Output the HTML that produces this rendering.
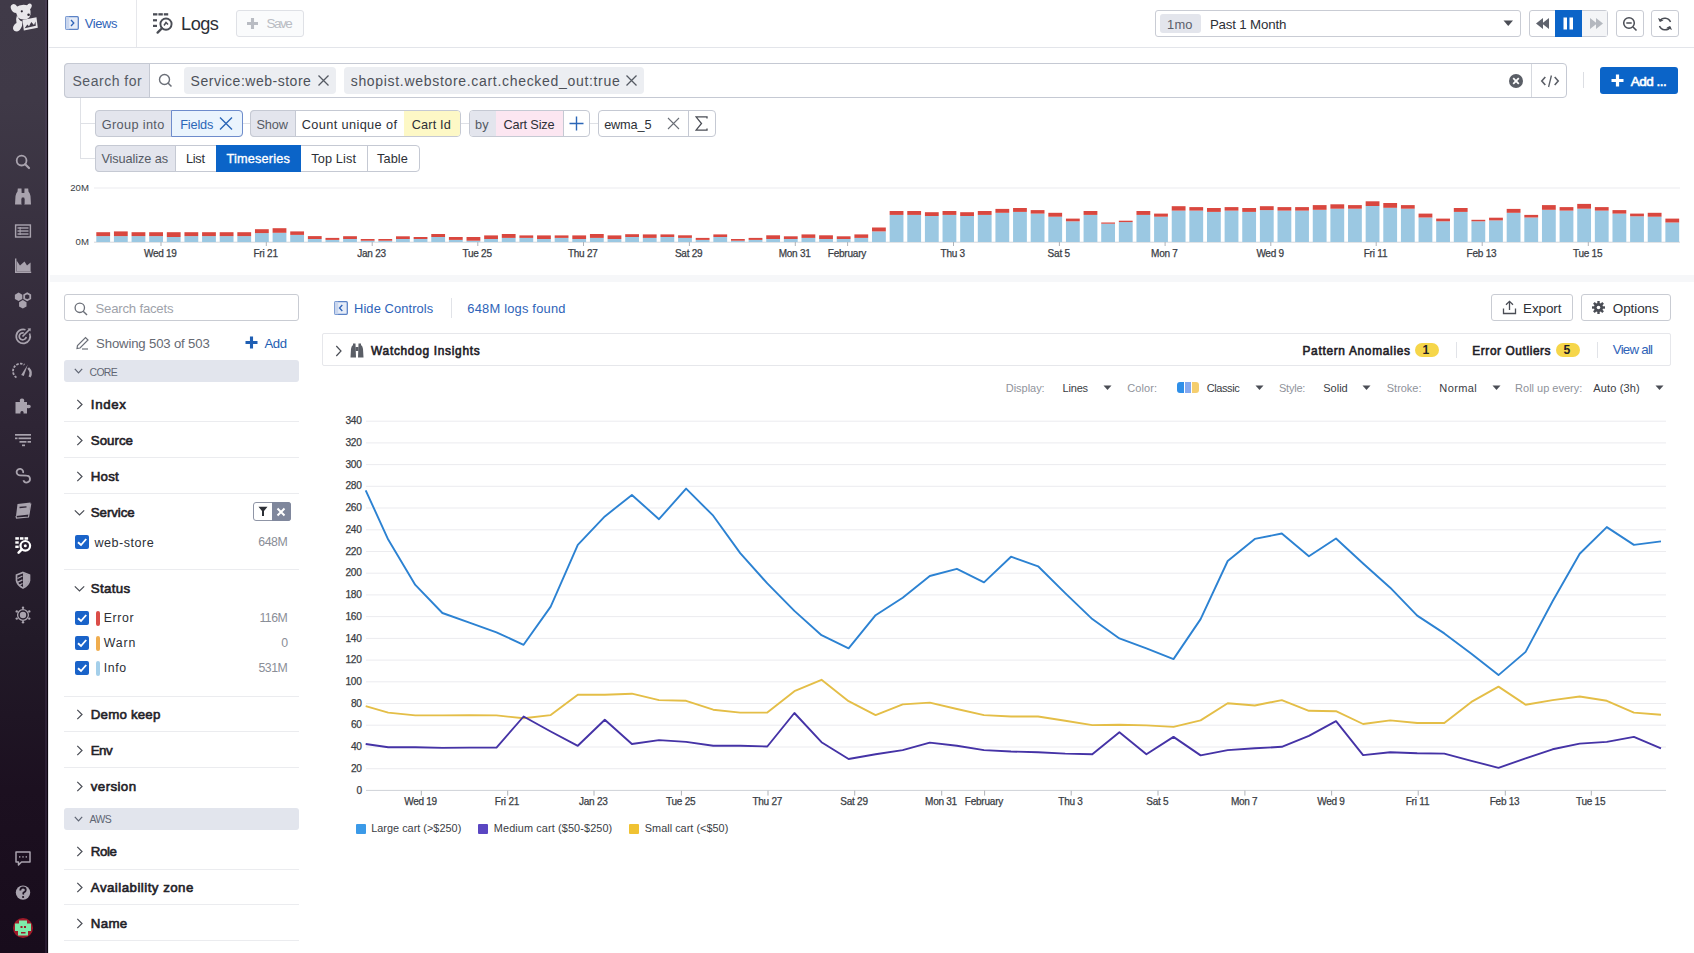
<!DOCTYPE html><html><head><meta charset="utf-8"><style>
html,body{margin:0;padding:0;}
body{width:1694px;height:953px;position:relative;overflow:hidden;background:#fff;font-family:"Liberation Sans",sans-serif;}
.t{position:absolute;white-space:nowrap;}
.r{position:absolute;box-sizing:border-box;}
</style></head><body>
<div class="r" style="left:0px;top:0px;width:48px;height:953px;background:linear-gradient(180deg,#403a48 0%,#3f3947 10.5%,#2e2535 44.6%,#221a28 67.2%,#1c1020 82.9%,#180c1c 100%);"></div>
<div class="r" style="left:45px;top:0px;width:2px;height:953px;background:rgba(90,70,110,0.25);"></div>
<div class="r" style="left:47px;top:0px;width:1px;height:953px;background:#0e0711;"></div>
<div class="r" style="left:48px;top:0px;width:1px;height:953px;background:#e4e4e7;"></div>
<svg class="r" style="left:0;top:0" width="48" height="953"><g fill="#e8e6ea">
<ellipse cx="14.5" cy="8.5" rx="3.3" ry="4.6" transform="rotate(-30 14.5 8.5)"/>
<ellipse cx="29" cy="6.8" rx="2.4" ry="3.4" transform="rotate(30 29 6.8)"/>
<path d="M15.5 7.5 Q21 3.5 28 5.5 Q31 9 30.5 14.5 Q29.5 19 25 19.5 Q20.5 20 18 17.5 Q15.5 13.5 15.5 7.5 Z"/>
<path d="M17 15 Q19 21 22.5 21.5 L22 26 Q20 31 17 31.5 Q13.5 31.5 13 28.5 Q13 25 16.5 23 Q15.5 19 17 15 Z"/>
<path d="M22.5 20 L36.5 17.2 L37.8 27.8 L23.8 30.6 Z"/>
</g>
<circle cx="21.8" cy="11.3" r="1.1" fill="#2b2530"/>
<circle cx="28.6" cy="14.8" r="1.3" fill="#2b2530"/>
<path d="M24.7 28.3 L27.3 24.5 L29 26.3 L31.3 22 L34 25 L35.5 21.5 L35.8 25.8 Z" fill="#3f3947"/><circle cx="21.6" cy="160.6" r="4.9" fill="none" stroke="#a9a3ae" stroke-width="1.8"/><path d="M25.2 164.2 L29 168" stroke="#a9a3ae" stroke-width="2.2" stroke-linecap="round"/><g fill="#a9a3ae"><path d="M15 204.5 L15.5 196 Q16 193 17.5 191.5 L17.8 188.5 L21.5 188.5 L22 204.5 Z"/><path d="M31 204.5 L30.5 196 Q30 193 28.5 191.5 L28.2 188.5 L24.5 188.5 L24 204.5 Z"/><rect x="21" y="193" width="4" height="4.5"/></g><rect x="21.4" y="198.5" width="3.2" height="6" fill="#3a3342"/><rect x="15.6" y="225" width="14.8" height="12" fill="none" stroke="#a9a3ae" stroke-width="1.4"/><g fill="#a9a3ae"><rect x="17.5" y="227.3" width="11" height="1.4"/><rect x="17.5" y="230.3" width="11" height="1.4"/><rect x="17.5" y="233.3" width="11" height="1.4"/><rect x="19.6" y="227" width="1" height="8" /></g><path d="M15.7 258.5 L15.7 272.3 L31.2 272.3" fill="none" stroke="#a9a3ae" stroke-width="1.4"/><path d="M16.6 271.6 L16.6 260.5 L20 265.5 L24.5 261.5 L27 265.5 L30.6 262.5 L30.6 271.6 Z" fill="#a9a3ae"/><polygon points="22.32,298.95 18.60,301.10 14.88,298.95 14.88,294.65 18.60,292.50 22.32,294.65" fill="#a9a3ae"/><polygon points="26.52,306.45 22.80,308.60 19.08,306.45 19.08,302.15 22.80,300.00 26.52,302.15" fill="#a9a3ae"/><polygon points="30.23,298.55 27.20,300.30 24.17,298.55 24.17,295.05 27.20,293.30 30.23,295.05" fill="none" stroke="#a9a3ae" stroke-width="1.8"/><g fill="none" stroke="#a9a3ae" stroke-width="1.7"><path d="M29.6 333.5 A7 7 0 1 1 25.5 329.8"/><path d="M26.2 336.8 A3.5 3.5 0 1 1 23.8 333"/></g><path d="M22.5 336.5 L29.5 329.5" stroke="#a9a3ae" stroke-width="1.7"/><path d="M27.5 328.5 L30.8 328.3 L30.5 331.5 Z" fill="#a9a3ae"/><path d="M16.5 377.5 A7.5 7.5 0 0 1 24.5 364.8" fill="none" stroke="#a9a3ae" stroke-width="1.8" stroke-dasharray="2.4 1.3"/><path d="M21.2 375 L27.8 364.5 L23.8 376 Z" fill="#a9a3ae"/><path d="M28.2 368 A7.5 7.5 0 0 1 29.6 377" fill="none" stroke="#a9a3ae" stroke-width="2.4"/><path d="M15.5 402 L20 402 Q19 398.5 22 398.5 Q25 398.5 24 402 L27 402 L27 405 Q30.8 404 30.8 406.5 Q30.8 409 27 408 L27 413.5 L23.5 413.5 Q24 411 22 411 Q20 411 20.5 413.5 L15.5 413.5 Z" fill="#a9a3ae"/><g fill="#a9a3ae"><rect x="15" y="434" width="16" height="1.7"/><rect x="15" y="437.5" width="2.5" height="1.7"/><rect x="18.5" y="437.5" width="12.5" height="1.7"/><rect x="19.5" y="441" width="7" height="1.7"/><rect x="27.5" y="441" width="3.5" height="1.7"/><rect x="22" y="444.5" width="3" height="1.7"/></g><path d="M23.1 473 A3.3 3.3 0 1 0 19.8 475.4 L26.6 475.7 A3.4 3.4 0 1 1 23.4 480.2" fill="none" stroke="#a9a3ae" stroke-width="1.8"/><path d="M17.5 504 L30.5 502.5 L29 514.5 L16 516 Z" fill="#a9a3ae"/><path d="M16 516 L16.5 518 L28.5 517 L30.8 503.5" fill="none" stroke="#a9a3ae" stroke-width="1.2"/><rect x="19.5" y="506.5" width="7" height="1.3" fill="#2f2636" transform="rotate(-6 23 507)"/><g fill="#ffffff"><rect x="15.3" y="537.2" width="3.6" height="2.5"/><rect x="19.9" y="537.2" width="3.6" height="2.5"/><rect x="24.5" y="537.2" width="3.6" height="2.5"/><rect x="15.3" y="541.3" width="3.4" height="2.4"/><rect x="15.3" y="545.6" width="3.4" height="2.4"/></g><circle cx="25.3" cy="545.8" r="4.8" fill="none" stroke="#ffffff" stroke-width="2.2"/><circle cx="25.3" cy="545.8" r="1.5" fill="#ffffff"/><path d="M21.8 549.4 L18.6 552.6" stroke="#ffffff" stroke-width="2.6" stroke-linecap="round"/><path d="M23 572.5 L29.5 575 L29.5 580.5 Q28.5 585.5 23 588 Q17.5 585.5 16.5 580.5 L16.5 575 Z" fill="none" stroke="#a9a3ae" stroke-width="1.7"/><path d="M23 573 L29 575.3 L29 580.5 Q28 585 23 587.3 Z" fill="#a9a3ae"/><path d="M17.5 578.5 L22.5 576 M17.5 582.3 L22.5 579.8 M19.2 585.3 L22.5 583.5" stroke="#a9a3ae" stroke-width="1.3"/><circle cx="23" cy="615" r="5.4" fill="none" stroke="#a9a3ae" stroke-width="1.3"/><circle cx="23" cy="615" r="3.2" fill="#a9a3ae"/><g fill="#a9a3ae"><circle cx="23.00" cy="622.20" r="1.2"/><circle cx="16.76" cy="618.60" r="1.2"/><circle cx="16.76" cy="611.40" r="1.2"/><circle cx="23.00" cy="607.80" r="1.2"/><circle cx="29.24" cy="611.40" r="1.2"/><circle cx="29.24" cy="618.60" r="1.2"/></g><path d="M16 852 L30 852 L30 862 L21.5 862 L18.5 865 L18.5 862 L16 862 Z" fill="none" stroke="#a9a3ae" stroke-width="1.5" stroke-linejoin="round"/><g fill="#a9a3ae"><rect x="19" y="856.2" width="1.4" height="1.4"/><rect x="22.3" y="856.2" width="1.4" height="1.4"/><rect x="25.6" y="856.2" width="1.4" height="1.4"/></g><circle cx="23" cy="892.6" r="7.2" fill="#a9a3ae"/><path d="M20.3 890.5 Q20.3 887.5 23 887.5 Q25.8 887.5 25.8 890 Q25.8 891.8 23.5 892.6 L23.2 894.5" fill="none" stroke="#1d1222" stroke-width="1.8"/><circle cx="23.1" cy="897" r="1.1" fill="#1d1222"/><circle cx="23" cy="928" r="10" fill="#9e1b2a"/><path d="M19 920.5 L27 920.5 L27 923.5 L31 923.5 L31 931 L28 931 L28 935.5 L18 935.5 L18 931 L15 931 L15 923.5 L19 923.5 Z" fill="#7fecaa"/><rect x="20.5" y="926" width="2" height="2" fill="#9e1b2a"/><rect x="24" y="926" width="2" height="2" fill="#9e1b2a"/><rect x="21" y="932" width="4.5" height="1.5" fill="#9e1b2a"/></svg>
<div class="r" style="left:49px;top:47px;width:1645px;height:1px;background:#e3e5ea;"></div>
<svg class="r" style="left:65px;top:16px;" width="14" height="14" viewBox="0 0 14 14"><rect x="0.7" y="0.7" width="12.6" height="12.6" rx="1" fill="#e6ecf7" stroke="#5b82c6" stroke-width="1.3"/><rect x="0.7" y="0.7" width="3.5" height="12.6" fill="#c9d6ee"/><path d="M6 4 L8.8 7 L6 10" fill="none" stroke="#2e63b8" stroke-width="1.3"/></svg>
<div class="t" style="left:84.8px;top:15.4px;font-size:12.88px;line-height:17px;letter-spacing:-0.384px;color:#2e63b8;">Views</div>
<div class="r" style="left:136px;top:0px;width:1px;height:47px;background:#e6e7eb;"></div>
<svg class="r" style="left:152px;top:12px;" width="22" height="22" viewBox="0 0 22 22"><g fill="#4a4d55"><rect x="1" y="1.2" width="4.4" height="2.3"/><rect x="6.4" y="1.2" width="4.4" height="2.3"/><rect x="11.8" y="1.2" width="4.4" height="2.3"/><rect x="1" y="7.2" width="4" height="2.2"/><rect x="1" y="12.8" width="4" height="2.2"/></g><circle cx="14" cy="12.1" r="5.6" fill="none" stroke="#4a4d55" stroke-width="1.9"/><path d="M12 13.5 L14 10.5 L16 12.5" fill="none" stroke="#4a4d55" stroke-width="1.5"/><path d="M10 16.2 L5.6 20.6" stroke="#4a4d55" stroke-width="2.3" stroke-linecap="round"/></svg>
<div class="t" style="left:181.1px;top:11.9px;font-size:18.18px;line-height:24px;letter-spacing:-0.575px;color:#2c2f36;">Logs</div>
<div class="r" style="left:236px;top:10px;width:68px;height:27px;border:1px solid #dfe1e6;border-radius:3px;background:#fafbfc;"></div>
<svg class="r" style="left:246px;top:17px;" width="13" height="13" viewBox="0 0 13 13"><path d="M6.5 1 L6.5 12 M1 6.5 L12 6.5" stroke="#b9bcc3" stroke-width="3.1"/></svg>
<div class="t" style="left:266.5px;top:15.4px;font-size:13.46px;line-height:17px;letter-spacing:-1.491px;color:#b9bcc3;">Save</div>
<div class="r" style="left:1155px;top:10px;width:366px;height:27px;border:1px solid #c9ccd4;border-radius:3px;background:#fff;"></div>
<div class="r" style="left:1160px;top:14px;width:41px;height:19px;background:#e3e5ec;border-radius:3px;"></div>
<div class="t" style="left:1167.1px;top:15.7px;font-size:12.88px;line-height:17px;letter-spacing:0.168px;color:#5c606b;">1mo</div>
<div class="t" style="left:1209.9px;top:15.7px;font-size:13.31px;line-height:17px;letter-spacing:-0.177px;color:#2c2f36;">Past 1 Month</div>
<svg class="r" style="left:1503px;top:20px;" width="11" height="7" viewBox="0 0 11 7"><path d="M0.5 0.5 L10 0.5 L5.25 6 Z" fill="#4a4d55"/></svg>
<div class="r" style="left:1529px;top:10px;width:79px;height:27px;border:1px solid #c9ccd4;border-radius:3px;background:#fff;"></div>
<div class="r" style="left:1582px;top:11px;width:25px;height:25px;background:#f4f5f7;"></div>
<div class="r" style="left:1555px;top:10px;width:27px;height:27px;background:#0b64c8;"></div>
<svg class="r" style="left:1535px;top:17px;" width="16" height="13" viewBox="0 0 16 13"><path d="M8 1 L1 6.5 L8 12 Z M14 1 L7 6.5 L14 12 Z" fill="#5f636d"/></svg>
<svg class="r" style="left:1562px;top:17px;" width="13" height="13" viewBox="0 0 13 13"><rect x="1.5" y="0.5" width="3.5" height="12" fill="#fff"/><rect x="7.5" y="0.5" width="3.5" height="12" fill="#fff"/></svg>
<svg class="r" style="left:1589px;top:17px;" width="16" height="13" viewBox="0 0 16 13"><path d="M1 1 L8 6.5 L1 12 Z M7 1 L14 6.5 L7 12 Z" fill="#b4b8bf"/></svg>
<div class="r" style="left:1616px;top:10px;width:28px;height:27px;border:1px solid #c9ccd4;border-radius:3px;background:#fff;"></div>
<svg class="r" style="left:1622px;top:16px;" width="16" height="16" viewBox="0 0 16 16"><circle cx="7" cy="7" r="5.3" fill="none" stroke="#4a4d55" stroke-width="1.5"/><path d="M4.3 7 L9.7 7" stroke="#4a4d55" stroke-width="1.5"/><path d="M11 11 L14.5 14.5" stroke="#4a4d55" stroke-width="1.6"/></svg>
<div class="r" style="left:1651px;top:10px;width:28px;height:27px;border:1px solid #c9ccd4;border-radius:3px;background:#fff;"></div>
<svg class="r" style="left:1657px;top:16px;" width="16" height="16" viewBox="0 0 16 16"><path d="M13.5 6 A6 6 0 0 0 2.8 5" fill="none" stroke="#4a4d55" stroke-width="1.5"/><path d="M2.5 10 A6 6 0 0 0 13.2 11" fill="none" stroke="#4a4d55" stroke-width="1.5"/><path d="M1 2 L2.8 6 L6.5 4.5 Z" fill="#4a4d55"/><path d="M15 14 L13.2 10 L9.5 11.5 Z" fill="#4a4d55"/></svg>
<div class="r" style="left:64px;top:63px;width:1503px;height:35px;border:1px solid #c5c9d3;border-radius:4px;background:#fff;"></div>
<div class="r" style="left:64px;top:63px;width:86px;height:35px;border:1px solid #c5c9d3;border-right:1px solid #c5c9d3;border-radius:4px 0 0 4px;background:#e3e5ed;"></div>
<div class="t" style="left:72.5px;top:72.0px;font-size:14.03px;line-height:18px;letter-spacing:0.509px;color:#555a64;">Search for</div>
<svg class="r" style="left:158px;top:73px;" width="16" height="16" viewBox="0 0 16 16"><circle cx="6.5" cy="6.5" r="5" fill="none" stroke="#6b6f78" stroke-width="1.4"/><path d="M10 10 L13.5 13.5" stroke="#6b6f78" stroke-width="1.5"/></svg>
<div class="r" style="left:184px;top:67px;width:152px;height:27px;background:#eceef2;border-radius:4px;"></div>
<div class="t" style="left:190.6px;top:72.0px;font-size:14.03px;line-height:18px;letter-spacing:0.508px;color:#4d5159;">Service:web-store</div>
<svg class="r" style="left:318px;top:75px;" width="11" height="11" viewBox="0 0 11 11"><path d="M0.5 0.5 L10.5 10.5 M10.5 0.5 L0.5 10.5" stroke="#555a63" stroke-width="1.3"/></svg>
<div class="r" style="left:344px;top:67px;width:300px;height:27px;background:#eceef2;border-radius:4px;"></div>
<div class="t" style="left:350.7px;top:72.0px;font-size:14.03px;line-height:18px;letter-spacing:0.681px;color:#4d5159;">shopist.webstore.cart.checked_out:true</div>
<svg class="r" style="left:626px;top:75px;" width="11" height="11" viewBox="0 0 11 11"><path d="M0.5 0.5 L10.5 10.5 M10.5 0.5 L0.5 10.5" stroke="#555a63" stroke-width="1.3"/></svg>
<svg class="r" style="left:1508px;top:73px;" width="16" height="16" viewBox="0 0 16 16"><circle cx="8" cy="8" r="7" fill="#5a5e66"/><path d="M5.2 5.2 L10.8 10.8 M10.8 5.2 L5.2 10.8" stroke="#fff" stroke-width="1.8"/></svg>
<div class="r" style="left:1531px;top:64px;width:1px;height:33px;background:#d6d9df;"></div>
<svg class="r" style="left:1540px;top:73px;" width="20" height="16" viewBox="0 0 20 16"><path d="M5.3 4 L1.8 8 L5.3 12 M14.7 4 L18.2 8 L14.7 12" fill="none" stroke="#5a5e66" stroke-width="1.6"/><path d="M11.4 2.5 L8.6 14" fill="none" stroke="#5a5e66" stroke-width="1.3"/></svg>
<div class="r" style="left:1583px;top:72px;width:1px;height:16px;background:#dcdee3;"></div>
<div class="r" style="left:1600px;top:67px;width:78px;height:27px;background:#0b64c8;border-radius:3px;"></div>
<svg class="r" style="left:1611px;top:74px;" width="13" height="13" viewBox="0 0 13 13"><path d="M6.5 0.5 L6.5 12.5 M0.5 6.5 L12.5 6.5" stroke="#fff" stroke-width="3.2"/></svg>
<div class="t" style="left:1630.7px;top:72.9px;font-size:13.46px;line-height:17px;letter-spacing:-0.483px;color:#ffffff;-webkit-text-stroke:0.6px #ffffff;">Add ...</div>
<div class="r" style="left:80px;top:98px;width:1px;height:61px;background:#dfe1e6;"></div>
<div class="r" style="left:80px;top:123px;width:15px;height:1px;background:#dfe1e6;"></div>
<div class="r" style="left:80px;top:158px;width:15px;height:1px;background:#dfe1e6;"></div>
<div class="r" style="left:242px;top:123px;width:8px;height:1px;background:#dfe1e6;"></div>
<div class="r" style="left:460px;top:123px;width:10px;height:1px;background:#dfe1e6;"></div>
<div class="r" style="left:589px;top:123px;width:10px;height:1px;background:#dfe1e6;"></div>
<div class="r" style="left:95px;top:110px;width:148px;height:27px;border:1px solid #c5c9d3;border-radius:4px;background:#e3e5ed;"></div>
<div class="r" style="left:171px;top:110px;width:72px;height:27px;border:1px solid #6e8ccc;border-radius:0 4px 4px 0;background:#eaf4fd;"></div>
<div class="t" style="left:101.8px;top:115.6px;font-size:12.74px;line-height:17px;letter-spacing:0.334px;color:#555a64;">Group into</div>
<div class="t" style="left:180.2px;top:115.6px;font-size:12.74px;line-height:17px;letter-spacing:-0.157px;color:#2b66b7;">Fields</div>
<svg class="r" style="left:219px;top:117px;" width="14" height="13" viewBox="0 0 14 13"><path d="M1 0.5 L13 12.5 M13 0.5 L1 12.5" stroke="#2b66b7" stroke-width="1.4"/></svg>
<div class="r" style="left:250px;top:110px;width:211px;height:27px;border:1px solid #c5c9d3;border-radius:4px;background:#fff;"></div>
<div class="r" style="left:250px;top:110px;width:46px;height:27px;border:1px solid #c5c9d3;border-radius:4px 0 0 4px;background:#e3e5ed;"></div>
<div class="r" style="left:404px;top:111px;width:56px;height:25px;background:#fdf8c6;border-radius:0 3px 3px 0;"></div>
<div class="t" style="left:256.5px;top:115.6px;font-size:12.74px;line-height:17px;letter-spacing:-0.157px;color:#555a64;">Show</div>
<div class="t" style="left:301.7px;top:115.6px;font-size:12.74px;line-height:17px;letter-spacing:0.381px;color:#2c2f36;">Count unique of</div>
<div class="t" style="left:411.8px;top:115.6px;font-size:12.74px;line-height:17px;letter-spacing:0.127px;color:#2c2f36;">Cart Id</div>
<div class="r" style="left:469px;top:110px;width:121px;height:27px;border:1px solid #c5c9d3;border-radius:4px;background:#fff;"></div>
<div class="r" style="left:470px;top:111px;width:26px;height:25px;background:#e3e5ed;border-radius:3px 0 0 3px;"></div>
<div class="r" style="left:496px;top:111px;width:67px;height:25px;background:#fce6f1;"></div>
<div class="r" style="left:563px;top:110px;width:1px;height:27px;background:#c5c9d3;"></div>
<div class="t" style="left:474.9px;top:115.6px;font-size:12.74px;line-height:17px;letter-spacing:0.343px;color:#555a64;">by</div>
<div class="t" style="left:503.5px;top:115.6px;font-size:12.74px;line-height:17px;letter-spacing:-0.150px;color:#2c2f36;">Cart Size</div>
<svg class="r" style="left:569px;top:116px;" width="15" height="15" viewBox="0 0 15 15"><path d="M7.5 0.5 L7.5 14.5 M0.5 7.5 L14.5 7.5" stroke="#2b66b7" stroke-width="1.4"/></svg>
<div class="r" style="left:598px;top:110px;width:118px;height:27px;border:1px solid #c5c9d3;border-radius:4px;background:#fff;"></div>
<div class="r" style="left:688px;top:110px;width:1px;height:27px;background:#c5c9d3;"></div>
<div class="t" style="left:604.2px;top:115.6px;font-size:12.74px;line-height:17px;letter-spacing:-0.172px;color:#2c2f36;">ewma_5</div>
<svg class="r" style="left:667px;top:117px;" width="13" height="13" viewBox="0 0 13 13"><path d="M1 1 L12 12 M12 1 L1 12" stroke="#6a6e76" stroke-width="1.1"/></svg>
<svg class="r" style="left:695px;top:116px;" width="13" height="15" viewBox="0 0 13 15"><path d="M12 2.5 L12 0.8 L1 0.8 L6.5 7.5 L1 14.2 L12 14.2 L12 12.5" fill="none" stroke="#4a4d55" stroke-width="1.3"/></svg>
<div class="r" style="left:95px;top:145px;width:325px;height:27px;border:1px solid #c5c9d3;border-radius:4px;background:#fff;"></div>
<div class="r" style="left:95px;top:145px;width:81px;height:27px;border:1px solid #c5c9d3;border-radius:4px 0 0 4px;background:#e3e5ed;"></div>
<div class="r" style="left:216px;top:145px;width:85px;height:27px;background:#0b64c8;"></div>
<div class="r" style="left:367px;top:146px;width:1px;height:25px;background:#c5c9d3;"></div>
<div class="t" style="left:101.4px;top:150.3px;font-size:12.74px;line-height:17px;letter-spacing:-0.087px;color:#555a64;">Visualize as</div>
<div class="t" style="left:185.9px;top:150.3px;font-size:12.74px;line-height:17px;letter-spacing:-0.242px;color:#2c2f36;">List</div>
<div class="t" style="left:226.5px;top:150.3px;font-size:12.74px;line-height:17px;letter-spacing:0.175px;color:#ffffff;-webkit-text-stroke:0.35px #fff;">Timeseries</div>
<div class="t" style="left:311.2px;top:150.3px;font-size:12.74px;line-height:17px;letter-spacing:0.127px;color:#2c2f36;">Top List</div>
<div class="t" style="left:377.0px;top:150.3px;font-size:12.74px;line-height:17px;letter-spacing:0.110px;color:#2c2f36;">Table</div>
<svg class="r" style="left:0;top:0" width="1694" height="280"><rect x="94" y="187.5" width="1586" height="1" fill="#ececef"/><rect x="94" y="241.7" width="1586" height="1" fill="#d5d7dc"/><rect x="96.30" y="236.10" width="13.8" height="5.90" fill="#9bc8e2"/><rect x="96.30" y="232.20" width="13.8" height="3.90" fill="#d9473f"/><rect x="113.93" y="236.10" width="13.8" height="5.90" fill="#9bc8e2"/><rect x="113.93" y="231.40" width="13.8" height="4.70" fill="#d9473f"/><rect x="131.56" y="236.10" width="13.8" height="5.90" fill="#9bc8e2"/><rect x="131.56" y="232.20" width="13.8" height="3.90" fill="#d9473f"/><rect x="149.19" y="236.10" width="13.8" height="5.90" fill="#9bc8e2"/><rect x="149.19" y="232.20" width="13.8" height="3.90" fill="#d9473f"/><rect x="166.82" y="237.00" width="13.8" height="5.00" fill="#9bc8e2"/><rect x="166.82" y="232.20" width="13.8" height="4.80" fill="#d9473f"/><rect x="184.45" y="236.10" width="13.8" height="5.90" fill="#9bc8e2"/><rect x="184.45" y="232.20" width="13.8" height="3.90" fill="#d9473f"/><rect x="202.08" y="236.10" width="13.8" height="5.90" fill="#9bc8e2"/><rect x="202.08" y="232.20" width="13.8" height="3.90" fill="#d9473f"/><rect x="219.71" y="236.10" width="13.8" height="5.90" fill="#9bc8e2"/><rect x="219.71" y="232.20" width="13.8" height="3.90" fill="#d9473f"/><rect x="237.34" y="236.10" width="13.8" height="5.90" fill="#9bc8e2"/><rect x="237.34" y="232.20" width="13.8" height="3.90" fill="#d9473f"/><rect x="254.97" y="233.10" width="13.8" height="8.90" fill="#9bc8e2"/><rect x="254.97" y="229.20" width="13.8" height="3.90" fill="#d9473f"/><rect x="272.60" y="232.80" width="13.8" height="9.20" fill="#9bc8e2"/><rect x="272.60" y="228.20" width="13.8" height="4.60" fill="#d9473f"/><rect x="290.23" y="234.90" width="13.8" height="7.10" fill="#9bc8e2"/><rect x="290.23" y="231.40" width="13.8" height="3.50" fill="#d9473f"/><rect x="307.86" y="239.00" width="13.8" height="3.00" fill="#9bc8e2"/><rect x="307.86" y="236.10" width="13.8" height="2.90" fill="#d9473f"/><rect x="325.49" y="239.90" width="13.8" height="2.10" fill="#9bc8e2"/><rect x="325.49" y="237.90" width="13.8" height="2.00" fill="#d9473f"/><rect x="343.12" y="239.00" width="13.8" height="3.00" fill="#9bc8e2"/><rect x="343.12" y="236.20" width="13.8" height="2.80" fill="#d9473f"/><rect x="360.75" y="240.70" width="13.8" height="1.30" fill="#9bc8e2"/><rect x="360.75" y="239.00" width="13.8" height="1.70" fill="#d9473f"/><rect x="378.38" y="240.70" width="13.8" height="1.30" fill="#9bc8e2"/><rect x="378.38" y="239.00" width="13.8" height="1.70" fill="#d9473f"/><rect x="396.01" y="239.00" width="13.8" height="3.00" fill="#9bc8e2"/><rect x="396.01" y="236.30" width="13.8" height="2.70" fill="#d9473f"/><rect x="413.64" y="239.00" width="13.8" height="3.00" fill="#9bc8e2"/><rect x="413.64" y="237.00" width="13.8" height="2.00" fill="#d9473f"/><rect x="431.27" y="237.00" width="13.8" height="5.00" fill="#9bc8e2"/><rect x="431.27" y="234.00" width="13.8" height="3.00" fill="#d9473f"/><rect x="448.90" y="239.90" width="13.8" height="2.10" fill="#9bc8e2"/><rect x="448.90" y="237.00" width="13.8" height="2.90" fill="#d9473f"/><rect x="466.53" y="240.70" width="13.8" height="1.30" fill="#9bc8e2"/><rect x="466.53" y="237.00" width="13.8" height="3.70" fill="#d9473f"/><rect x="484.16" y="239.00" width="13.8" height="3.00" fill="#9bc8e2"/><rect x="484.16" y="235.40" width="13.8" height="3.60" fill="#d9473f"/><rect x="501.79" y="237.90" width="13.8" height="4.10" fill="#9bc8e2"/><rect x="501.79" y="234.00" width="13.8" height="3.90" fill="#d9473f"/><rect x="519.42" y="237.90" width="13.8" height="4.10" fill="#9bc8e2"/><rect x="519.42" y="235.40" width="13.8" height="2.50" fill="#d9473f"/><rect x="537.05" y="239.00" width="13.8" height="3.00" fill="#9bc8e2"/><rect x="537.05" y="235.40" width="13.8" height="3.60" fill="#d9473f"/><rect x="554.68" y="237.90" width="13.8" height="4.10" fill="#9bc8e2"/><rect x="554.68" y="235.40" width="13.8" height="2.50" fill="#d9473f"/><rect x="572.31" y="239.00" width="13.8" height="3.00" fill="#9bc8e2"/><rect x="572.31" y="235.40" width="13.8" height="3.60" fill="#d9473f"/><rect x="589.94" y="237.90" width="13.8" height="4.10" fill="#9bc8e2"/><rect x="589.94" y="234.00" width="13.8" height="3.90" fill="#d9473f"/><rect x="607.57" y="239.00" width="13.8" height="3.00" fill="#9bc8e2"/><rect x="607.57" y="235.40" width="13.8" height="3.60" fill="#d9473f"/><rect x="625.20" y="237.00" width="13.8" height="5.00" fill="#9bc8e2"/><rect x="625.20" y="234.20" width="13.8" height="2.80" fill="#d9473f"/><rect x="642.83" y="237.90" width="13.8" height="4.10" fill="#9bc8e2"/><rect x="642.83" y="234.40" width="13.8" height="3.50" fill="#d9473f"/><rect x="660.46" y="237.00" width="13.8" height="5.00" fill="#9bc8e2"/><rect x="660.46" y="234.40" width="13.8" height="2.60" fill="#d9473f"/><rect x="678.09" y="237.90" width="13.8" height="4.10" fill="#9bc8e2"/><rect x="678.09" y="235.30" width="13.8" height="2.60" fill="#d9473f"/><rect x="695.72" y="239.90" width="13.8" height="2.10" fill="#9bc8e2"/><rect x="695.72" y="237.90" width="13.8" height="2.00" fill="#d9473f"/><rect x="713.35" y="237.00" width="13.8" height="5.00" fill="#9bc8e2"/><rect x="713.35" y="234.40" width="13.8" height="2.60" fill="#d9473f"/><rect x="730.98" y="240.70" width="13.8" height="1.30" fill="#9bc8e2"/><rect x="730.98" y="239.00" width="13.8" height="1.70" fill="#d9473f"/><rect x="748.61" y="239.90" width="13.8" height="2.10" fill="#9bc8e2"/><rect x="748.61" y="237.90" width="13.8" height="2.00" fill="#d9473f"/><rect x="766.24" y="239.00" width="13.8" height="3.00" fill="#9bc8e2"/><rect x="766.24" y="235.30" width="13.8" height="3.70" fill="#d9473f"/><rect x="783.87" y="239.00" width="13.8" height="3.00" fill="#9bc8e2"/><rect x="783.87" y="236.30" width="13.8" height="2.70" fill="#d9473f"/><rect x="801.50" y="237.90" width="13.8" height="4.10" fill="#9bc8e2"/><rect x="801.50" y="234.40" width="13.8" height="3.50" fill="#d9473f"/><rect x="819.13" y="239.00" width="13.8" height="3.00" fill="#9bc8e2"/><rect x="819.13" y="235.30" width="13.8" height="3.70" fill="#d9473f"/><rect x="836.76" y="239.00" width="13.8" height="3.00" fill="#9bc8e2"/><rect x="836.76" y="236.30" width="13.8" height="2.70" fill="#d9473f"/><rect x="854.39" y="237.90" width="13.8" height="4.10" fill="#9bc8e2"/><rect x="854.39" y="234.40" width="13.8" height="3.50" fill="#d9473f"/><rect x="872.02" y="231.40" width="13.8" height="10.60" fill="#9bc8e2"/><rect x="872.02" y="227.50" width="13.8" height="3.90" fill="#d9473f"/><rect x="889.65" y="214.90" width="13.8" height="27.10" fill="#9bc8e2"/><rect x="889.65" y="211.00" width="13.8" height="3.90" fill="#d9473f"/><rect x="907.28" y="214.90" width="13.8" height="27.10" fill="#9bc8e2"/><rect x="907.28" y="211.00" width="13.8" height="3.90" fill="#d9473f"/><rect x="924.91" y="216.00" width="13.8" height="26.00" fill="#9bc8e2"/><rect x="924.91" y="212.20" width="13.8" height="3.80" fill="#d9473f"/><rect x="942.54" y="214.90" width="13.8" height="27.10" fill="#9bc8e2"/><rect x="942.54" y="211.00" width="13.8" height="3.90" fill="#d9473f"/><rect x="960.17" y="216.00" width="13.8" height="26.00" fill="#9bc8e2"/><rect x="960.17" y="212.20" width="13.8" height="3.80" fill="#d9473f"/><rect x="977.80" y="214.90" width="13.8" height="27.10" fill="#9bc8e2"/><rect x="977.80" y="211.00" width="13.8" height="3.90" fill="#d9473f"/><rect x="995.43" y="212.80" width="13.8" height="29.20" fill="#9bc8e2"/><rect x="995.43" y="208.90" width="13.8" height="3.90" fill="#d9473f"/><rect x="1013.06" y="211.90" width="13.8" height="30.10" fill="#9bc8e2"/><rect x="1013.06" y="208.00" width="13.8" height="3.90" fill="#d9473f"/><rect x="1030.69" y="213.60" width="13.8" height="28.40" fill="#9bc8e2"/><rect x="1030.69" y="210.10" width="13.8" height="3.50" fill="#d9473f"/><rect x="1048.32" y="216.70" width="13.8" height="25.30" fill="#9bc8e2"/><rect x="1048.32" y="212.80" width="13.8" height="3.90" fill="#d9473f"/><rect x="1065.95" y="221.30" width="13.8" height="20.70" fill="#9bc8e2"/><rect x="1065.95" y="218.60" width="13.8" height="2.70" fill="#d9473f"/><rect x="1083.58" y="214.90" width="13.8" height="27.10" fill="#9bc8e2"/><rect x="1083.58" y="211.00" width="13.8" height="3.90" fill="#d9473f"/><rect x="1101.21" y="223.70" width="13.8" height="18.30" fill="#9bc8e2"/><rect x="1101.21" y="222.50" width="13.8" height="1.20" fill="#d9473f"/><rect x="1118.84" y="222.10" width="13.8" height="19.90" fill="#9bc8e2"/><rect x="1118.84" y="220.70" width="13.8" height="1.40" fill="#d9473f"/><rect x="1136.47" y="214.90" width="13.8" height="27.10" fill="#9bc8e2"/><rect x="1136.47" y="211.00" width="13.8" height="3.90" fill="#d9473f"/><rect x="1154.10" y="216.70" width="13.8" height="25.30" fill="#9bc8e2"/><rect x="1154.10" y="213.60" width="13.8" height="3.10" fill="#d9473f"/><rect x="1171.73" y="210.60" width="13.8" height="31.40" fill="#9bc8e2"/><rect x="1171.73" y="206.20" width="13.8" height="4.40" fill="#d9473f"/><rect x="1189.36" y="210.60" width="13.8" height="31.40" fill="#9bc8e2"/><rect x="1189.36" y="207.10" width="13.8" height="3.50" fill="#d9473f"/><rect x="1206.99" y="211.90" width="13.8" height="30.10" fill="#9bc8e2"/><rect x="1206.99" y="208.00" width="13.8" height="3.90" fill="#d9473f"/><rect x="1224.62" y="210.60" width="13.8" height="31.40" fill="#9bc8e2"/><rect x="1224.62" y="207.10" width="13.8" height="3.50" fill="#d9473f"/><rect x="1242.25" y="211.90" width="13.8" height="30.10" fill="#9bc8e2"/><rect x="1242.25" y="208.00" width="13.8" height="3.90" fill="#d9473f"/><rect x="1259.88" y="210.10" width="13.8" height="31.90" fill="#9bc8e2"/><rect x="1259.88" y="206.20" width="13.8" height="3.90" fill="#d9473f"/><rect x="1277.51" y="210.60" width="13.8" height="31.40" fill="#9bc8e2"/><rect x="1277.51" y="207.10" width="13.8" height="3.50" fill="#d9473f"/><rect x="1295.14" y="210.60" width="13.8" height="31.40" fill="#9bc8e2"/><rect x="1295.14" y="207.10" width="13.8" height="3.50" fill="#d9473f"/><rect x="1312.77" y="209.80" width="13.8" height="32.20" fill="#9bc8e2"/><rect x="1312.77" y="205.10" width="13.8" height="4.70" fill="#d9473f"/><rect x="1330.40" y="208.70" width="13.8" height="33.30" fill="#9bc8e2"/><rect x="1330.40" y="204.30" width="13.8" height="4.40" fill="#d9473f"/><rect x="1348.03" y="208.70" width="13.8" height="33.30" fill="#9bc8e2"/><rect x="1348.03" y="205.10" width="13.8" height="3.60" fill="#d9473f"/><rect x="1365.66" y="206.00" width="13.8" height="36.00" fill="#9bc8e2"/><rect x="1365.66" y="201.30" width="13.8" height="4.70" fill="#d9473f"/><rect x="1383.29" y="207.80" width="13.8" height="34.20" fill="#9bc8e2"/><rect x="1383.29" y="203.00" width="13.8" height="4.80" fill="#d9473f"/><rect x="1400.92" y="208.70" width="13.8" height="33.30" fill="#9bc8e2"/><rect x="1400.92" y="205.10" width="13.8" height="3.60" fill="#d9473f"/><rect x="1418.55" y="217.50" width="13.8" height="24.50" fill="#9bc8e2"/><rect x="1418.55" y="213.60" width="13.8" height="3.90" fill="#d9473f"/><rect x="1436.18" y="221.30" width="13.8" height="20.70" fill="#9bc8e2"/><rect x="1436.18" y="218.60" width="13.8" height="2.70" fill="#d9473f"/><rect x="1453.81" y="211.90" width="13.8" height="30.10" fill="#9bc8e2"/><rect x="1453.81" y="208.00" width="13.8" height="3.90" fill="#d9473f"/><rect x="1471.44" y="221.30" width="13.8" height="20.70" fill="#9bc8e2"/><rect x="1471.44" y="219.80" width="13.8" height="1.50" fill="#d9473f"/><rect x="1489.07" y="220.40" width="13.8" height="21.60" fill="#9bc8e2"/><rect x="1489.07" y="217.70" width="13.8" height="2.70" fill="#d9473f"/><rect x="1506.70" y="212.80" width="13.8" height="29.20" fill="#9bc8e2"/><rect x="1506.70" y="208.90" width="13.8" height="3.90" fill="#d9473f"/><rect x="1524.33" y="217.50" width="13.8" height="24.50" fill="#9bc8e2"/><rect x="1524.33" y="214.90" width="13.8" height="2.60" fill="#d9473f"/><rect x="1541.96" y="209.80" width="13.8" height="32.20" fill="#9bc8e2"/><rect x="1541.96" y="205.10" width="13.8" height="4.70" fill="#d9473f"/><rect x="1559.59" y="210.60" width="13.8" height="31.40" fill="#9bc8e2"/><rect x="1559.59" y="207.10" width="13.8" height="3.50" fill="#d9473f"/><rect x="1577.22" y="208.70" width="13.8" height="33.30" fill="#9bc8e2"/><rect x="1577.22" y="203.90" width="13.8" height="4.80" fill="#d9473f"/><rect x="1594.85" y="210.60" width="13.8" height="31.40" fill="#9bc8e2"/><rect x="1594.85" y="207.10" width="13.8" height="3.50" fill="#d9473f"/><rect x="1612.48" y="213.60" width="13.8" height="28.40" fill="#9bc8e2"/><rect x="1612.48" y="210.10" width="13.8" height="3.50" fill="#d9473f"/><rect x="1630.11" y="216.30" width="13.8" height="25.70" fill="#9bc8e2"/><rect x="1630.11" y="213.60" width="13.8" height="2.70" fill="#d9473f"/><rect x="1647.74" y="216.70" width="13.8" height="25.30" fill="#9bc8e2"/><rect x="1647.74" y="212.80" width="13.8" height="3.90" fill="#d9473f"/><rect x="1665.37" y="222.50" width="13.8" height="19.50" fill="#9bc8e2"/><rect x="1665.37" y="218.60" width="13.8" height="3.90" fill="#d9473f"/><rect x="160.5" y="242" width="1" height="4" fill="#b0b3b9"/><rect x="265.8" y="242" width="1" height="4" fill="#b0b3b9"/><rect x="371.7" y="242" width="1" height="4" fill="#b0b3b9"/><rect x="477.3" y="242" width="1" height="4" fill="#b0b3b9"/><rect x="583.0" y="242" width="1" height="4" fill="#b0b3b9"/><rect x="688.9" y="242" width="1" height="4" fill="#b0b3b9"/><rect x="794.8" y="242" width="1" height="4" fill="#b0b3b9"/><rect x="847.1" y="242" width="1" height="4" fill="#b0b3b9"/><rect x="953.0" y="242" width="1" height="4" fill="#b0b3b9"/><rect x="1058.9" y="242" width="1" height="4" fill="#b0b3b9"/><rect x="1164.6" y="242" width="1" height="4" fill="#b0b3b9"/><rect x="1270.3" y="242" width="1" height="4" fill="#b0b3b9"/><rect x="1375.7" y="242" width="1" height="4" fill="#b0b3b9"/><rect x="1481.7" y="242" width="1" height="4" fill="#b0b3b9"/><rect x="1587.8" y="242" width="1" height="4" fill="#b0b3b9"/></svg>
<div class="t" style="left:70.2px;top:181.7px;font-size:9.59px;line-height:12px;letter-spacing:0.020px;color:#3a3d44;">20M</div>
<div class="t" style="left:75.4px;top:235.8px;font-size:9.59px;line-height:12px;letter-spacing:0.175px;color:#3a3d44;">0M</div>
<div class="t" style="left:143.9px;top:246.8px;font-size:10.02px;line-height:13px;letter-spacing:-0.275px;color:#3a3d44;-webkit-text-stroke:0.25px #3a3d44;">Wed 19</div>
<div class="t" style="left:253.4px;top:246.8px;font-size:10.02px;line-height:13px;letter-spacing:-0.205px;color:#3a3d44;-webkit-text-stroke:0.25px #3a3d44;">Fri 21</div>
<div class="t" style="left:357.2px;top:246.8px;font-size:10.02px;line-height:13px;letter-spacing:-0.241px;color:#3a3d44;-webkit-text-stroke:0.25px #3a3d44;">Jan 23</div>
<div class="t" style="left:462.4px;top:246.8px;font-size:10.02px;line-height:13px;letter-spacing:-0.247px;color:#3a3d44;-webkit-text-stroke:0.25px #3a3d44;">Tue 25</div>
<div class="t" style="left:567.9px;top:246.8px;font-size:10.02px;line-height:13px;letter-spacing:-0.250px;color:#3a3d44;-webkit-text-stroke:0.25px #3a3d44;">Thu 27</div>
<div class="t" style="left:674.9px;top:246.8px;font-size:10.02px;line-height:13px;letter-spacing:-0.232px;color:#3a3d44;-webkit-text-stroke:0.25px #3a3d44;">Sat 29</div>
<div class="t" style="left:778.7px;top:246.8px;font-size:10.02px;line-height:13px;letter-spacing:-0.267px;color:#3a3d44;-webkit-text-stroke:0.25px #3a3d44;">Mon 31</div>
<div class="t" style="left:827.8px;top:246.8px;font-size:10.02px;line-height:13px;letter-spacing:-0.229px;color:#3a3d44;-webkit-text-stroke:0.25px #3a3d44;">February</div>
<div class="t" style="left:940.6px;top:246.8px;font-size:10.02px;line-height:13px;letter-spacing:-0.256px;color:#3a3d44;-webkit-text-stroke:0.25px #3a3d44;">Thu 3</div>
<div class="t" style="left:1047.6px;top:246.8px;font-size:10.02px;line-height:13px;letter-spacing:-0.234px;color:#3a3d44;-webkit-text-stroke:0.25px #3a3d44;">Sat 5</div>
<div class="t" style="left:1151.1px;top:246.8px;font-size:10.02px;line-height:13px;letter-spacing:-0.279px;color:#3a3d44;-webkit-text-stroke:0.25px #3a3d44;">Mon 7</div>
<div class="t" style="left:1256.4px;top:246.8px;font-size:10.02px;line-height:13px;letter-spacing:-0.288px;color:#3a3d44;-webkit-text-stroke:0.25px #3a3d44;">Wed 9</div>
<div class="t" style="left:1363.7px;top:246.8px;font-size:10.02px;line-height:13px;letter-spacing:-0.199px;color:#3a3d44;-webkit-text-stroke:0.25px #3a3d44;">Fri 11</div>
<div class="t" style="left:1466.6px;top:246.8px;font-size:10.02px;line-height:13px;letter-spacing:-0.250px;color:#3a3d44;-webkit-text-stroke:0.25px #3a3d44;">Feb 13</div>
<div class="t" style="left:1572.9px;top:246.8px;font-size:10.02px;line-height:13px;letter-spacing:-0.247px;color:#3a3d44;-webkit-text-stroke:0.25px #3a3d44;">Tue 15</div>
<div class="r" style="left:50px;top:275px;width:1644px;height:7px;background:#f6f7f9;"></div>
<div class="r" style="left:64px;top:294px;width:235px;height:27px;border:1px solid #c9ccd3;border-radius:3px;background:#fff;"></div>
<svg class="r" style="left:74px;top:302px;" width="14" height="14" viewBox="0 0 14 14"><circle cx="5.8" cy="5.8" r="4.7" fill="none" stroke="#6b6f78" stroke-width="1.3"/><path d="M9.2 9.2 L13 13" stroke="#6b6f78" stroke-width="1.4"/></svg>
<div class="t" style="left:95.5px;top:300.2px;font-size:13.17px;line-height:17px;letter-spacing:-0.202px;color:#9ea2aa;">Search facets</div>
<svg class="r" style="left:75px;top:336px;" width="15" height="14" viewBox="0 0 15 14"><path d="M2 12.5 L2.5 9.5 L10.5 1.5 L13 4 L5 12 Z" fill="none" stroke="#6b6f78" stroke-width="1.2"/><path d="M7 13 L13 13" stroke="#6b6f78" stroke-width="1.2"/></svg>
<div class="t" style="left:96.1px;top:335.0px;font-size:13.17px;line-height:17px;letter-spacing:-0.155px;color:#666a73;">Showing 503 of 503</div>
<svg class="r" style="left:245px;top:336px;" width="13" height="13" viewBox="0 0 13 13"><path d="M6.5 0.5 L6.5 12.5 M0.5 6.5 L12.5 6.5" stroke="#1f5fb3" stroke-width="3.1"/></svg>
<div class="t" style="left:264.4px;top:334.7px;font-size:13.17px;line-height:17px;letter-spacing:-0.418px;color:#1f5fb3;">Add</div>
<div class="r" style="left:64px;top:360px;width:235px;height:22px;background:#e2e5ed;border-radius:3px;"></div>
<svg class="r" style="left:74px;top:368px;" width="10" height="7" viewBox="0 0 10 7"><path d="M0.8 0.8 L4.5 4.8 L8.2 0.8" fill="none" stroke="#5f6573" stroke-width="1.2"/></svg>
<div class="t" style="left:89.6px;top:365.9px;font-size:10.45px;line-height:14px;letter-spacing:-0.705px;color:#5f6573;">CORE</div>
<svg class="r" style="left:76px;top:399px;" width="8" height="11" viewBox="0 0 8 11"><path d="M1.3 0.8 L6 5.5 L1.3 10.2" fill="none" stroke="#4a4d55" stroke-width="1.2"/></svg>
<div class="t" style="left:90.8px;top:395.7px;font-size:13.31px;line-height:17px;letter-spacing:0.658px;color:#1f2127;-webkit-text-stroke:0.6px #1f2127;">Index</div>
<div class="r" style="left:64px;top:421px;width:235px;height:1px;background:#ebecef;"></div>
<svg class="r" style="left:76px;top:435px;" width="8" height="11" viewBox="0 0 8 11"><path d="M1.3 0.8 L6 5.5 L1.3 10.2" fill="none" stroke="#4a4d55" stroke-width="1.2"/></svg>
<div class="t" style="left:90.8px;top:431.7px;font-size:13.31px;line-height:17px;letter-spacing:0.003px;color:#1f2127;-webkit-text-stroke:0.6px #1f2127;">Source</div>
<div class="r" style="left:64px;top:457px;width:235px;height:1px;background:#ebecef;"></div>
<svg class="r" style="left:76px;top:471px;" width="8" height="11" viewBox="0 0 8 11"><path d="M1.3 0.8 L6 5.5 L1.3 10.2" fill="none" stroke="#4a4d55" stroke-width="1.2"/></svg>
<div class="t" style="left:90.8px;top:467.7px;font-size:13.31px;line-height:17px;letter-spacing:0.208px;color:#1f2127;-webkit-text-stroke:0.6px #1f2127;">Host</div>
<div class="r" style="left:64px;top:493px;width:235px;height:1px;background:#ebecef;"></div>
<svg class="r" style="left:74px;top:509px;" width="11" height="8" viewBox="0 0 11 8"><path d="M0.8 1.3 L5.5 6 L10.2 1.3" fill="none" stroke="#4a4d55" stroke-width="1.2"/></svg>
<div class="t" style="left:90.8px;top:503.7px;font-size:13.31px;line-height:17px;letter-spacing:-0.066px;color:#1f2127;-webkit-text-stroke:0.6px #1f2127;">Service</div>
<div class="r" style="left:253px;top:502px;width:38px;height:19px;border:1px solid #8f95a6;border-radius:3px;background:#fff;"></div>
<div class="r" style="left:272px;top:502px;width:19px;height:19px;background:#7f879c;border-radius:0 3px 3px 0;"></div>
<svg class="r" style="left:258px;top:506px;" width="10" height="11" viewBox="0 0 10 11"><path d="M0.5 0.8 L9.5 0.8 L6 5 L6 10 L4 10 L4 5 Z" fill="#2c2f36"/></svg>
<svg class="r" style="left:276px;top:507px;" width="10" height="10" viewBox="0 0 10 10"><path d="M1.5 1.5 L8.5 8.5 M8.5 1.5 L1.5 8.5" stroke="#fff" stroke-width="2"/></svg>
<div class="r" style="left:75px;top:535px;width:14px;height:14px;background:#1a63c9;border-radius:2px;"></div>
<svg class="r" style="left:75px;top:535px;" width="14" height="14" viewBox="0 0 14 14"><path d="M3 7.2 L6 10 L11.2 4" fill="none" stroke="#fff" stroke-width="1.9"/></svg>
<div class="t" style="left:94.4px;top:534.7px;font-size:12.60px;line-height:16px;letter-spacing:0.498px;color:#2c2f36;">web-store</div>
<div class="t" style="left:258.2px;top:533.9px;font-size:12.31px;line-height:16px;letter-spacing:-0.399px;color:#8a8e97;">648M</div>
<div class="r" style="left:64px;top:569px;width:235px;height:1px;background:#ebecef;"></div>
<svg class="r" style="left:74px;top:585px;" width="11" height="8" viewBox="0 0 11 8"><path d="M0.8 1.3 L5.5 6 L10.2 1.3" fill="none" stroke="#4a4d55" stroke-width="1.2"/></svg>
<div class="t" style="left:90.8px;top:579.7px;font-size:13.31px;line-height:17px;letter-spacing:0.331px;color:#1f2127;-webkit-text-stroke:0.6px #1f2127;">Status</div>
<div class="r" style="left:75px;top:611px;width:14px;height:14px;background:#1a63c9;border-radius:2px;"></div>
<svg class="r" style="left:75px;top:611px;" width="14" height="14" viewBox="0 0 14 14"><path d="M3 7.2 L6 10 L11.2 4" fill="none" stroke="#fff" stroke-width="1.9"/></svg>
<div class="r" style="left:96px;top:610.5px;width:4px;height:15.0px;background:#db4d48;border-radius:2px;"></div>
<div class="t" style="left:103.8px;top:610.4px;font-size:12.31px;line-height:16px;letter-spacing:0.616px;color:#2c2f36;">Error</div>
<div class="t" style="left:259.4px;top:609.9px;font-size:12.31px;line-height:16px;letter-spacing:-0.498px;color:#8a8e97;">116M</div>
<div class="r" style="left:75px;top:636px;width:14px;height:14px;background:#1a63c9;border-radius:2px;"></div>
<svg class="r" style="left:75px;top:636px;" width="14" height="14" viewBox="0 0 14 14"><path d="M3 7.2 L6 10 L11.2 4" fill="none" stroke="#fff" stroke-width="1.9"/></svg>
<div class="r" style="left:96px;top:635.5px;width:4px;height:15.0px;background:#f0ad4e;border-radius:2px;"></div>
<div class="t" style="left:103.8px;top:635.4px;font-size:12.31px;line-height:16px;letter-spacing:0.869px;color:#2c2f36;">Warn</div>
<div class="t" style="left:281.3px;top:634.9px;font-size:12.31px;line-height:16px;letter-spacing:0.000px;color:#8a8e97;">0</div>
<div class="r" style="left:75px;top:661px;width:14px;height:14px;background:#1a63c9;border-radius:2px;"></div>
<svg class="r" style="left:75px;top:661px;" width="14" height="14" viewBox="0 0 14 14"><path d="M3 7.2 L6 10 L11.2 4" fill="none" stroke="#fff" stroke-width="1.9"/></svg>
<div class="r" style="left:96px;top:660.5px;width:4px;height:15.0px;background:#a4cfea;border-radius:2px;"></div>
<div class="t" style="left:103.8px;top:660.4px;font-size:12.31px;line-height:16px;letter-spacing:0.616px;color:#2c2f36;">Info</div>
<div class="t" style="left:258.5px;top:659.9px;font-size:12.31px;line-height:16px;letter-spacing:-0.513px;color:#8a8e97;">531M</div>
<div class="r" style="left:64px;top:696px;width:235px;height:1px;background:#ebecef;"></div>
<svg class="r" style="left:76px;top:709.3px;" width="8" height="11" viewBox="0 0 8 11"><path d="M1.3 0.8 L6 5.5 L1.3 10.2" fill="none" stroke="#4a4d55" stroke-width="1.2"/></svg>
<div class="t" style="left:90.8px;top:706.0px;font-size:13.31px;line-height:17px;letter-spacing:0.189px;color:#1f2127;-webkit-text-stroke:0.6px #1f2127;">Demo keep</div>
<div class="r" style="left:64px;top:731px;width:235px;height:1px;background:#ebecef;"></div>
<svg class="r" style="left:76px;top:745.2px;" width="8" height="11" viewBox="0 0 8 11"><path d="M1.3 0.8 L6 5.5 L1.3 10.2" fill="none" stroke="#4a4d55" stroke-width="1.2"/></svg>
<div class="t" style="left:90.8px;top:741.9px;font-size:13.31px;line-height:17px;letter-spacing:-0.571px;color:#1f2127;-webkit-text-stroke:0.6px #1f2127;">Env</div>
<div class="r" style="left:64px;top:767px;width:235px;height:1px;background:#ebecef;"></div>
<svg class="r" style="left:76px;top:781px;" width="8" height="11" viewBox="0 0 8 11"><path d="M1.3 0.8 L6 5.5 L1.3 10.2" fill="none" stroke="#4a4d55" stroke-width="1.2"/></svg>
<div class="t" style="left:90.8px;top:777.7px;font-size:13.31px;line-height:17px;letter-spacing:0.397px;color:#1f2127;-webkit-text-stroke:0.6px #1f2127;">version</div>
<div class="r" style="left:64px;top:808px;width:235px;height:22px;background:#e2e5ed;border-radius:3px;"></div>
<svg class="r" style="left:74px;top:815.5px;" width="10" height="7" viewBox="0 0 10 7"><path d="M0.8 0.8 L4.5 4.8 L8.2 0.8" fill="none" stroke="#5f6573" stroke-width="1.2"/></svg>
<div class="t" style="left:89.6px;top:813.0px;font-size:10.45px;line-height:14px;letter-spacing:-0.585px;color:#5f6573;">AWS</div>
<svg class="r" style="left:76px;top:846px;" width="8" height="11" viewBox="0 0 8 11"><path d="M1.3 0.8 L6 5.5 L1.3 10.2" fill="none" stroke="#4a4d55" stroke-width="1.2"/></svg>
<div class="t" style="left:90.8px;top:842.7px;font-size:13.31px;line-height:17px;letter-spacing:-0.394px;color:#1f2127;-webkit-text-stroke:0.6px #1f2127;">Role</div>
<div class="r" style="left:64px;top:869px;width:235px;height:1px;background:#ebecef;"></div>
<svg class="r" style="left:76px;top:882.3px;" width="8" height="11" viewBox="0 0 8 11"><path d="M1.3 0.8 L6 5.5 L1.3 10.2" fill="none" stroke="#4a4d55" stroke-width="1.2"/></svg>
<div class="t" style="left:90.8px;top:879.0px;font-size:13.31px;line-height:17px;letter-spacing:0.467px;color:#1f2127;-webkit-text-stroke:0.6px #1f2127;">Availability zone</div>
<div class="r" style="left:64px;top:904px;width:235px;height:1px;background:#ebecef;"></div>
<svg class="r" style="left:76px;top:918.2px;" width="8" height="11" viewBox="0 0 8 11"><path d="M1.3 0.8 L6 5.5 L1.3 10.2" fill="none" stroke="#4a4d55" stroke-width="1.2"/></svg>
<div class="t" style="left:90.8px;top:914.9px;font-size:13.31px;line-height:17px;letter-spacing:0.295px;color:#1f2127;-webkit-text-stroke:0.6px #1f2127;">Name</div>
<div class="r" style="left:64px;top:940px;width:235px;height:1px;background:#ebecef;"></div>
<svg class="r" style="left:334px;top:301px;" width="14" height="14" viewBox="0 0 14 14"><rect x="0.7" y="0.7" width="12.6" height="12.6" rx="1" fill="#e6ecf7" stroke="#5b82c6" stroke-width="1.3"/><rect x="0.7" y="0.7" width="3.5" height="12.6" fill="#c9d6ee"/><path d="M8.3 4 L5.5 7 L8.3 10" fill="none" stroke="#2e63b8" stroke-width="1.3"/></svg>
<div class="t" style="left:354.0px;top:299.9px;font-size:12.88px;line-height:17px;letter-spacing:0.104px;color:#2e63b8;">Hide Controls</div>
<div class="r" style="left:451px;top:298px;width:1px;height:20px;background:#e1e3e8;"></div>
<div class="t" style="left:467.3px;top:299.9px;font-size:12.88px;line-height:17px;letter-spacing:0.209px;color:#2e63b8;">648M logs found</div>
<div class="r" style="left:1491px;top:294px;width:82px;height:27px;border:1px solid #c9ccd3;border-radius:3px;background:#fff;"></div>
<svg class="r" style="left:1502px;top:300px;" width="15" height="15" viewBox="0 0 15 15"><path d="M7.5 10 L7.5 1.5 M4 4.8 L7.5 1.3 L11 4.8" fill="none" stroke="#4a4d55" stroke-width="1.3"/><path d="M1.5 8.5 L1.5 13.5 L13.5 13.5 L13.5 8.5" fill="none" stroke="#4a4d55" stroke-width="1.3"/></svg>
<div class="t" style="left:1523.1px;top:300.0px;font-size:13.46px;line-height:17px;letter-spacing:-0.099px;color:#2c2f36;">Export</div>
<div class="r" style="left:1581px;top:294px;width:90px;height:27px;border:1px solid #c9ccd3;border-radius:3px;background:#fff;"></div>
<svg class="r" style="left:1592px;top:301px;" width="13" height="13" viewBox="0 0 13 13"><g fill="#4a4d55"><circle cx="6.5" cy="6.5" r="4.6"/><rect x="5.3" y="0" width="2.4" height="13"/><rect x="0" y="5.3" width="13" height="2.4"/><rect x="5.3" y="0" width="2.4" height="13" transform="rotate(45 6.5 6.5)"/><rect x="5.3" y="0" width="2.4" height="13" transform="rotate(-45 6.5 6.5)"/></g><circle cx="6.5" cy="6.5" r="1.8" fill="#fff"/></svg>
<div class="t" style="left:1612.8px;top:300.0px;font-size:13.46px;line-height:17px;letter-spacing:-0.079px;color:#2c2f36;">Options</div>
<div class="r" style="left:322px;top:333px;width:1349px;height:33px;border:1px solid #e6e7eb;border-radius:2px;background:#fff;"></div>
<svg class="r" style="left:335px;top:345px;" width="8" height="12" viewBox="0 0 8 12"><path d="M1.3 1 L6 6 L1.3 11" fill="none" stroke="#4a4d55" stroke-width="1.2"/></svg>
<svg class="r" style="left:350px;top:343px;" width="14" height="15" viewBox="0 0 14 15"><g fill="#5a5e66"><path d="M0.5 14.5 L1 6 Q1.3 3 3 2 L3 0.5 L5.5 0.5 L6 14.5 Z"/><path d="M13.5 14.5 L13 6 Q12.7 3 11 2 L11 0.5 L8.5 0.5 L8 14.5 Z"/><rect x="5.5" y="4" width="3" height="4"/></g></svg>
<div class="t" style="left:371.1px;top:343.7px;font-size:11.88px;line-height:15px;letter-spacing:0.706px;color:#1f2127;-webkit-text-stroke:0.6px #1f2127;">Watchdog Insights</div>
<div class="t" style="left:1302.5px;top:343.7px;font-size:11.88px;line-height:15px;letter-spacing:0.692px;color:#1f2127;-webkit-text-stroke:0.6px #1f2127;">Pattern Anomalies</div>
<div class="r" style="left:1415px;top:343px;width:24px;height:14px;background:#f6d64a;border-radius:7px;"></div>
<div class="t" style="left:1422.6px;top:342.4px;font-size:12.17px;line-height:16px;letter-spacing:0.000px;color:#1f2127;font-weight:bold;">1</div>
<div class="r" style="left:1456px;top:342px;width:1px;height:16px;background:#e1e3e8;"></div>
<div class="t" style="left:1472.3px;top:343.7px;font-size:11.88px;line-height:15px;letter-spacing:0.589px;color:#1f2127;-webkit-text-stroke:0.6px #1f2127;">Error Outliers</div>
<div class="r" style="left:1556px;top:343px;width:24px;height:14px;background:#f6d64a;border-radius:7px;"></div>
<div class="t" style="left:1563.6px;top:342.4px;font-size:12.17px;line-height:16px;letter-spacing:0.000px;color:#1f2127;font-weight:bold;">5</div>
<div class="r" style="left:1597px;top:342px;width:1px;height:16px;background:#e1e3e8;"></div>
<div class="t" style="left:1612.8px;top:341.4px;font-size:13.31px;line-height:17px;letter-spacing:-0.762px;color:#2e63b8;">View all</div>
<div class="t" style="left:1005.8px;top:381.0px;font-size:11.02px;line-height:14px;letter-spacing:-0.044px;color:#8f939b;">Display:</div>
<div class="t" style="left:1062.6px;top:381.0px;font-size:11.02px;line-height:14px;letter-spacing:-0.213px;color:#3a3d44;">Lines</div>
<svg class="r" style="left:1103px;top:385px;" width="9" height="6" viewBox="0 0 9 6"><path d="M0.5 0.5 L8.5 0.5 L4.5 5 Z" fill="#4a4d55"/></svg>
<div class="t" style="left:1127.3px;top:381.0px;font-size:11.02px;line-height:14px;letter-spacing:0.079px;color:#8f939b;">Color:</div>
<div class="r" style="left:1177px;top:382px;width:22px;height:11px;border-radius:3px;overflow:hidden;background:linear-gradient(90deg,#2f8fe8 0 33%,#fff 33% 36%,#85a9f0 36% 64%,#fff 64% 67%,#f5ce6e 67% 100%);"></div>
<div class="t" style="left:1206.7px;top:381.0px;font-size:11.02px;line-height:14px;letter-spacing:-0.421px;color:#3a3d44;">Classic</div>
<svg class="r" style="left:1255px;top:385px;" width="9" height="6" viewBox="0 0 9 6"><path d="M0.5 0.5 L8.5 0.5 L4.5 5 Z" fill="#4a4d55"/></svg>
<div class="t" style="left:1279.0px;top:381.0px;font-size:11.02px;line-height:14px;letter-spacing:-0.234px;color:#8f939b;">Style:</div>
<div class="t" style="left:1323.3px;top:381.0px;font-size:11.02px;line-height:14px;letter-spacing:-0.028px;color:#3a3d44;">Solid</div>
<svg class="r" style="left:1362px;top:385px;" width="9" height="6" viewBox="0 0 9 6"><path d="M0.5 0.5 L8.5 0.5 L4.5 5 Z" fill="#4a4d55"/></svg>
<div class="t" style="left:1386.8px;top:381.0px;font-size:11.02px;line-height:14px;letter-spacing:-0.037px;color:#8f939b;">Stroke:</div>
<div class="t" style="left:1439.3px;top:381.0px;font-size:11.02px;line-height:14px;letter-spacing:0.395px;color:#3a3d44;">Normal</div>
<svg class="r" style="left:1492px;top:385px;" width="9" height="6" viewBox="0 0 9 6"><path d="M0.5 0.5 L8.5 0.5 L4.5 5 Z" fill="#4a4d55"/></svg>
<div class="t" style="left:1515.1px;top:381.0px;font-size:11.02px;line-height:14px;letter-spacing:-0.015px;color:#8f939b;">Roll up every:</div>
<div class="t" style="left:1593.3px;top:381.0px;font-size:11.02px;line-height:14px;letter-spacing:0.145px;color:#3a3d44;">Auto (3h)</div>
<svg class="r" style="left:1655px;top:385px;" width="9" height="6" viewBox="0 0 9 6"><path d="M0.5 0.5 L8.5 0.5 L4.5 5 Z" fill="#4a4d55"/></svg>
<svg class="r" style="left:0;top:400px" width="1694" height="420" viewBox="0 400 1694 420"><rect x="366" y="789.9" width="1300" height="1" fill="#cfd2d7"/><rect x="366" y="768.2" width="1300" height="1" fill="#ececef"/><rect x="366" y="746.5" width="1300" height="1" fill="#ececef"/><rect x="366" y="724.7" width="1300" height="1" fill="#ececef"/><rect x="366" y="703.0" width="1300" height="1" fill="#ececef"/><rect x="366" y="681.3" width="1300" height="1" fill="#ececef"/><rect x="366" y="659.6" width="1300" height="1" fill="#ececef"/><rect x="366" y="637.9" width="1300" height="1" fill="#ececef"/><rect x="366" y="616.1" width="1300" height="1" fill="#ececef"/><rect x="366" y="594.4" width="1300" height="1" fill="#ececef"/><rect x="366" y="572.7" width="1300" height="1" fill="#ececef"/><rect x="366" y="551.0" width="1300" height="1" fill="#ececef"/><rect x="366" y="529.3" width="1300" height="1" fill="#ececef"/><rect x="366" y="507.5" width="1300" height="1" fill="#ececef"/><rect x="366" y="485.8" width="1300" height="1" fill="#ececef"/><rect x="366" y="464.1" width="1300" height="1" fill="#ececef"/><rect x="366" y="442.4" width="1300" height="1" fill="#ececef"/><rect x="366" y="420.7" width="1300" height="1" fill="#ececef"/><rect x="420.8" y="790.6" width="1" height="5" fill="#b0b3b9"/><rect x="507.2" y="790.6" width="1" height="5" fill="#b0b3b9"/><rect x="593.5" y="790.6" width="1" height="5" fill="#b0b3b9"/><rect x="680.9" y="790.6" width="1" height="5" fill="#b0b3b9"/><rect x="767.5" y="790.6" width="1" height="5" fill="#b0b3b9"/><rect x="854.2" y="790.6" width="1" height="5" fill="#b0b3b9"/><rect x="941.2" y="790.6" width="1" height="5" fill="#b0b3b9"/><rect x="984.1" y="790.6" width="1" height="5" fill="#b0b3b9"/><rect x="1070.7" y="790.6" width="1" height="5" fill="#b0b3b9"/><rect x="1157.5" y="790.6" width="1" height="5" fill="#b0b3b9"/><rect x="1244.4" y="790.6" width="1" height="5" fill="#b0b3b9"/><rect x="1331.1" y="790.6" width="1" height="5" fill="#b0b3b9"/><rect x="1417.7" y="790.6" width="1" height="5" fill="#b0b3b9"/><rect x="1504.8" y="790.6" width="1" height="5" fill="#b0b3b9"/><rect x="1590.8" y="790.6" width="1" height="5" fill="#b0b3b9"/><path d="M365.7 706.2 L388.2 712.6 L415.3 715.4 L442.4 715.4 L469.4 715.1 L496.5 715.4 L523.6 718.3 L550.7 715.1 L577.8 694.8 L604.8 694.8 L631.9 693.7 L659.0 700.1 L686.1 700.8 L713.2 709.7 L740.2 712.6 L767.3 712.6 L794.4 691.2 L821.5 679.8 L848.6 701.2 L875.6 715.1 L902.7 704.4 L929.8 702.6 L956.9 709.0 L984.0 715.1 L1011.0 716.5 L1038.1 716.5 L1065.2 720.8 L1092.3 725.1 L1119.4 724.7 L1146.4 725.4 L1173.5 726.9 L1200.6 720.4 L1227.7 703.3 L1254.8 705.5 L1281.8 700.1 L1308.9 710.8 L1336.0 711.2 L1363.1 724.0 L1390.2 720.4 L1417.2 723.0 L1444.3 723.0 L1471.4 701.9 L1498.5 686.6 L1525.6 704.7 L1552.6 700.1 L1579.7 696.5 L1606.8 700.8 L1633.9 712.6 L1661.0 714.7" fill="none" stroke="#e4be47" stroke-width="1.9" stroke-linejoin="round"/><path d="M365.7 744.0 L388.2 747.2 L415.3 747.2 L442.4 747.9 L469.4 747.6 L496.5 747.6 L523.6 716.5 L550.7 731.5 L577.8 745.8 L604.8 719.7 L631.9 744.0 L659.0 740.1 L686.1 741.9 L713.2 745.8 L740.2 745.8 L767.3 746.5 L794.4 713.0 L821.5 742.2 L848.6 759.0 L875.6 754.3 L902.7 750.1 L929.8 742.6 L956.9 745.8 L984.0 750.1 L1011.0 751.5 L1038.1 752.2 L1065.2 753.6 L1092.3 754.3 L1119.4 732.2 L1146.4 754.3 L1173.5 736.9 L1200.6 755.4 L1227.7 750.1 L1254.8 748.3 L1281.8 746.8 L1308.9 735.8 L1336.0 721.2 L1363.1 755.1 L1390.2 752.2 L1417.2 753.3 L1444.3 753.6 L1471.4 760.8 L1498.5 767.9 L1525.6 758.3 L1552.6 749.3 L1579.7 743.6 L1606.8 741.9 L1633.9 736.9 L1661.0 748.3" fill="none" stroke="#4533a6" stroke-width="1.9" stroke-linejoin="round"/><path d="M365.7 490.3 L388.2 539.6 L415.3 584.9 L442.4 613.0 L469.4 622.7 L496.5 632.3 L523.6 644.8 L550.7 606.6 L577.8 544.9 L604.8 516.4 L631.9 495.0 L659.0 519.2 L686.1 488.6 L713.2 515.7 L740.2 553.1 L767.3 583.4 L794.4 610.9 L821.5 635.2 L848.6 648.4 L875.6 615.2 L902.7 597.7 L929.8 576.0 L956.9 568.8 L984.0 582.4 L1011.0 556.7 L1038.1 566.3 L1065.2 593.1 L1092.3 619.1 L1119.4 638.4 L1146.4 648.4 L1173.5 659.1 L1200.6 619.1 L1227.7 561.0 L1254.8 538.9 L1281.8 533.5 L1308.9 556.3 L1336.0 538.5 L1363.1 563.5 L1390.2 587.7 L1417.2 615.6 L1444.3 633.4 L1471.4 653.7 L1498.5 675.1 L1525.6 651.9 L1552.6 601.3 L1579.7 553.8 L1606.8 527.1 L1633.9 544.9 L1661.0 541.4" fill="none" stroke="#2c82d2" stroke-width="1.9" stroke-linejoin="round"/></svg>
<div class="t" style="left:356.4px;top:783.5px;font-size:10.16px;line-height:13px;letter-spacing:0.000px;color:#3a3d44;-webkit-text-stroke:0.25px #3a3d44;">0</div>
<div class="t" style="left:350.9px;top:761.8px;font-size:10.16px;line-height:13px;letter-spacing:-0.339px;color:#3a3d44;-webkit-text-stroke:0.25px #3a3d44;">20</div>
<div class="t" style="left:350.9px;top:740.1px;font-size:10.16px;line-height:13px;letter-spacing:-0.339px;color:#3a3d44;-webkit-text-stroke:0.25px #3a3d44;">40</div>
<div class="t" style="left:350.9px;top:718.4px;font-size:10.16px;line-height:13px;letter-spacing:-0.339px;color:#3a3d44;-webkit-text-stroke:0.25px #3a3d44;">60</div>
<div class="t" style="left:350.9px;top:696.6px;font-size:10.16px;line-height:13px;letter-spacing:-0.339px;color:#3a3d44;-webkit-text-stroke:0.25px #3a3d44;">80</div>
<div class="t" style="left:345.4px;top:674.9px;font-size:10.16px;line-height:13px;letter-spacing:-0.254px;color:#3a3d44;-webkit-text-stroke:0.25px #3a3d44;">100</div>
<div class="t" style="left:345.4px;top:653.2px;font-size:10.16px;line-height:13px;letter-spacing:-0.254px;color:#3a3d44;-webkit-text-stroke:0.25px #3a3d44;">120</div>
<div class="t" style="left:345.4px;top:631.5px;font-size:10.16px;line-height:13px;letter-spacing:-0.254px;color:#3a3d44;-webkit-text-stroke:0.25px #3a3d44;">140</div>
<div class="t" style="left:345.4px;top:609.8px;font-size:10.16px;line-height:13px;letter-spacing:-0.254px;color:#3a3d44;-webkit-text-stroke:0.25px #3a3d44;">160</div>
<div class="t" style="left:345.4px;top:588.0px;font-size:10.16px;line-height:13px;letter-spacing:-0.254px;color:#3a3d44;-webkit-text-stroke:0.25px #3a3d44;">180</div>
<div class="t" style="left:345.4px;top:566.3px;font-size:10.16px;line-height:13px;letter-spacing:-0.254px;color:#3a3d44;-webkit-text-stroke:0.25px #3a3d44;">200</div>
<div class="t" style="left:345.4px;top:544.6px;font-size:10.16px;line-height:13px;letter-spacing:-0.254px;color:#3a3d44;-webkit-text-stroke:0.25px #3a3d44;">220</div>
<div class="t" style="left:345.4px;top:522.9px;font-size:10.16px;line-height:13px;letter-spacing:-0.254px;color:#3a3d44;-webkit-text-stroke:0.25px #3a3d44;">240</div>
<div class="t" style="left:345.4px;top:501.2px;font-size:10.16px;line-height:13px;letter-spacing:-0.254px;color:#3a3d44;-webkit-text-stroke:0.25px #3a3d44;">260</div>
<div class="t" style="left:345.4px;top:479.4px;font-size:10.16px;line-height:13px;letter-spacing:-0.254px;color:#3a3d44;-webkit-text-stroke:0.25px #3a3d44;">280</div>
<div class="t" style="left:345.4px;top:457.7px;font-size:10.16px;line-height:13px;letter-spacing:-0.254px;color:#3a3d44;-webkit-text-stroke:0.25px #3a3d44;">300</div>
<div class="t" style="left:345.4px;top:436.0px;font-size:10.16px;line-height:13px;letter-spacing:-0.254px;color:#3a3d44;-webkit-text-stroke:0.25px #3a3d44;">320</div>
<div class="t" style="left:345.4px;top:414.3px;font-size:10.16px;line-height:13px;letter-spacing:-0.254px;color:#3a3d44;-webkit-text-stroke:0.25px #3a3d44;">340</div>
<div class="t" style="left:404.2px;top:794.7px;font-size:10.02px;line-height:13px;letter-spacing:-0.275px;color:#3a3d44;-webkit-text-stroke:0.25px #3a3d44;">Wed 19</div>
<div class="t" style="left:494.8px;top:794.7px;font-size:10.02px;line-height:13px;letter-spacing:-0.205px;color:#3a3d44;-webkit-text-stroke:0.25px #3a3d44;">Fri 21</div>
<div class="t" style="left:579.0px;top:794.7px;font-size:10.02px;line-height:13px;letter-spacing:-0.241px;color:#3a3d44;-webkit-text-stroke:0.25px #3a3d44;">Jan 23</div>
<div class="t" style="left:666.0px;top:794.7px;font-size:10.02px;line-height:13px;letter-spacing:-0.247px;color:#3a3d44;-webkit-text-stroke:0.25px #3a3d44;">Tue 25</div>
<div class="t" style="left:752.4px;top:794.7px;font-size:10.02px;line-height:13px;letter-spacing:-0.250px;color:#3a3d44;-webkit-text-stroke:0.25px #3a3d44;">Thu 27</div>
<div class="t" style="left:840.2px;top:794.7px;font-size:10.02px;line-height:13px;letter-spacing:-0.232px;color:#3a3d44;-webkit-text-stroke:0.25px #3a3d44;">Sat 29</div>
<div class="t" style="left:925.1px;top:794.7px;font-size:10.02px;line-height:13px;letter-spacing:-0.267px;color:#3a3d44;-webkit-text-stroke:0.25px #3a3d44;">Mon 31</div>
<div class="t" style="left:964.8px;top:794.7px;font-size:10.02px;line-height:13px;letter-spacing:-0.229px;color:#3a3d44;-webkit-text-stroke:0.25px #3a3d44;">February</div>
<div class="t" style="left:1058.3px;top:794.7px;font-size:10.02px;line-height:13px;letter-spacing:-0.256px;color:#3a3d44;-webkit-text-stroke:0.25px #3a3d44;">Thu 3</div>
<div class="t" style="left:1146.2px;top:794.7px;font-size:10.02px;line-height:13px;letter-spacing:-0.234px;color:#3a3d44;-webkit-text-stroke:0.25px #3a3d44;">Sat 5</div>
<div class="t" style="left:1230.9px;top:794.7px;font-size:10.02px;line-height:13px;letter-spacing:-0.279px;color:#3a3d44;-webkit-text-stroke:0.25px #3a3d44;">Mon 7</div>
<div class="t" style="left:1317.2px;top:794.7px;font-size:10.02px;line-height:13px;letter-spacing:-0.288px;color:#3a3d44;-webkit-text-stroke:0.25px #3a3d44;">Wed 9</div>
<div class="t" style="left:1405.7px;top:794.7px;font-size:10.02px;line-height:13px;letter-spacing:-0.199px;color:#3a3d44;-webkit-text-stroke:0.25px #3a3d44;">Fri 11</div>
<div class="t" style="left:1489.7px;top:794.7px;font-size:10.02px;line-height:13px;letter-spacing:-0.250px;color:#3a3d44;-webkit-text-stroke:0.25px #3a3d44;">Feb 13</div>
<div class="t" style="left:1575.9px;top:794.7px;font-size:10.02px;line-height:13px;letter-spacing:-0.247px;color:#3a3d44;-webkit-text-stroke:0.25px #3a3d44;">Tue 15</div>
<div class="r" style="left:355.5px;top:823.5px;width:10.0px;height:10.0px;background:#3b9ae8;border-radius:1px;"></div>

<div class="t" style="left:371.2px;top:821.2px;font-size:10.88px;line-height:14px;letter-spacing:0.017px;color:#3a3d44;">Large cart (&gt;$250)</div>
<div class="r" style="left:478px;top:823.5px;width:10px;height:10.0px;background:#5a46c2;border-radius:1px;"></div>

<div class="t" style="left:493.8px;top:821.2px;font-size:10.88px;line-height:14px;letter-spacing:0.114px;color:#3a3d44;">Medium cart ($50-$250)</div>
<div class="r" style="left:629px;top:823.5px;width:10px;height:10.0px;background:#f0c232;border-radius:1px;"></div>

<div class="t" style="left:644.8px;top:821.2px;font-size:10.88px;line-height:14px;letter-spacing:0.022px;color:#3a3d44;">Small cart (&lt;$50)</div>
</body></html>
